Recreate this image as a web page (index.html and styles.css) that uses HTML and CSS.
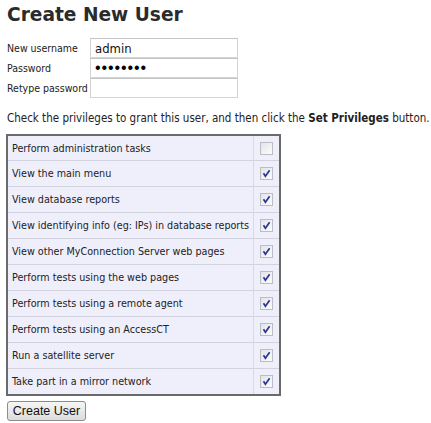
FILE: index.html
```html
<!DOCTYPE html>
<html>
<head>
<meta charset="utf-8">
<link rel="stylesheet" href="styles.css">
</head>
<body>
<h1 class="title">Create New User</h1>
<form class="user-form">
  <div class="fields">
    <label class="lbl" for="u">New username</label>
    <input class="inp" id="u" type="text" value="admin">
    <label class="lbl" for="p">Password</label>
    <input class="inp pw" id="p" type="password" value="password">
    <label class="lbl" for="r">Retype password</label>
    <input class="inp pw" id="r" type="password" value="">
  </div>
  <p class="intro">Check the privileges to grant this user, and then click the <b>Set Privileges</b> button.</p>
  <table class="privs">
    <tr><td class="name">Perform administration tasks</td><td class="chk"><label class="cb"><input type="checkbox"><svg class="tick" viewBox="0 0 13 13"><path d="M3.5 6.2 L5.4 9.2 L9.6 3.2" fill="none" stroke="#27349a" stroke-width="1.7"/></svg></label></td></tr>
    <tr><td class="name">View the main menu</td><td class="chk"><label class="cb"><input type="checkbox" checked><svg class="tick" viewBox="0 0 13 13"><path d="M3.5 6.2 L5.4 9.2 L9.6 3.2" fill="none" stroke="#27349a" stroke-width="1.7"/></svg></label></td></tr>
    <tr><td class="name">View database reports</td><td class="chk"><label class="cb"><input type="checkbox" checked><svg class="tick" viewBox="0 0 13 13"><path d="M3.5 6.2 L5.4 9.2 L9.6 3.2" fill="none" stroke="#27349a" stroke-width="1.7"/></svg></label></td></tr>
    <tr><td class="name">View identifying info (eg: IPs) in database reports</td><td class="chk"><label class="cb"><input type="checkbox" checked><svg class="tick" viewBox="0 0 13 13"><path d="M3.5 6.2 L5.4 9.2 L9.6 3.2" fill="none" stroke="#27349a" stroke-width="1.7"/></svg></label></td></tr>
    <tr><td class="name">View other MyConnection Server web pages</td><td class="chk"><label class="cb"><input type="checkbox" checked><svg class="tick" viewBox="0 0 13 13"><path d="M3.5 6.2 L5.4 9.2 L9.6 3.2" fill="none" stroke="#27349a" stroke-width="1.7"/></svg></label></td></tr>
    <tr><td class="name">Perform tests using the web pages</td><td class="chk"><label class="cb"><input type="checkbox" checked><svg class="tick" viewBox="0 0 13 13"><path d="M3.5 6.2 L5.4 9.2 L9.6 3.2" fill="none" stroke="#27349a" stroke-width="1.7"/></svg></label></td></tr>
    <tr><td class="name">Perform tests using a remote agent</td><td class="chk"><label class="cb"><input type="checkbox" checked><svg class="tick" viewBox="0 0 13 13"><path d="M3.5 6.2 L5.4 9.2 L9.6 3.2" fill="none" stroke="#27349a" stroke-width="1.7"/></svg></label></td></tr>
    <tr><td class="name">Perform tests using an AccessCT</td><td class="chk"><label class="cb"><input type="checkbox" checked><svg class="tick" viewBox="0 0 13 13"><path d="M3.5 6.2 L5.4 9.2 L9.6 3.2" fill="none" stroke="#27349a" stroke-width="1.7"/></svg></label></td></tr>
    <tr><td class="name">Run a satellite server</td><td class="chk"><label class="cb"><input type="checkbox" checked><svg class="tick" viewBox="0 0 13 13"><path d="M3.5 6.2 L5.4 9.2 L9.6 3.2" fill="none" stroke="#27349a" stroke-width="1.7"/></svg></label></td></tr>
    <tr><td class="name">Take part in a mirror network</td><td class="chk"><label class="cb"><input type="checkbox" checked><svg class="tick" viewBox="0 0 13 13"><path d="M3.5 6.2 L5.4 9.2 L9.6 3.2" fill="none" stroke="#27349a" stroke-width="1.7"/></svg></label></td></tr>
  </table>
  <button class="btn" type="button">Create User</button>
</form>
</body>
</html>
```
FILE: styles.css
```css
body {
  margin: 0;
  padding: 0 7px;
  font-family: "DejaVu Sans Condensed", "DejaVu Sans", sans-serif;
  font-size: 10.5px;
  color: #222;
  background: #fff;
}
.title {
  margin: 0;
  padding-top: 3px;
  height: 31px;
  font-family: "DejaVu Sans", sans-serif;
  font-size: 18.6px;
  font-weight: bold;
  color: #2b2b2b;
  line-height: 24px;
}
.user-form { margin: 0; }
.fields {
  display: grid;
  grid-template-columns: 83px 148px;
  align-items: center;
  margin-top: 4px;
}
.lbl {
  height: 20px;
  line-height: 20px;
  white-space: nowrap;
}
.inp {
  box-sizing: border-box;
  width: 148px;
  height: 20px;
  margin: 0;
  border: 1px solid #d4d4d4;
  border-top-color: #c4c4c4;
  padding: 0 4px;
  font-family: "DejaVu Sans Condensed", "DejaVu Sans", sans-serif;
  font-size: 13px;
  color: #111;
  background: #fff;
  outline: none;
}
.inp.pw {
  font-family: "Liberation Sans", Arial, sans-serif;
  font-size: 16px;
  letter-spacing: 0.9px;
  color: #000;
}
.intro {
  margin: 13px 0 9px;
  font-size: 11.5px;
  line-height: 14px;
  white-space: nowrap;
}
.privs {
  border-collapse: collapse;
  border: 2px solid #6a6a6a;
  background: #efeffc;
  margin-left: -1px;
  width: 275px;
  font-size: 10.7px;
}
.privs td {
  height: 25px;
  padding: 0 4px;
  border-top: 1px solid #d3d3e0;
  white-space: nowrap;
}
.privs tr:first-child td { border-top: none; height: 24px; }
.privs td.chk {
  width: 14px;
  text-align: center;
  border-left: 1px solid #d8d8e6;
  padding: 0 6px;
}
.cb {
  position: relative;
  display: inline-block;
  width: 13px;
  height: 13px;
  vertical-align: middle;
}
.cb input {
  appearance: none;
  -webkit-appearance: none;
  box-sizing: border-box;
  display: block;
  margin: 0;
  width: 13px;
  height: 13px;
  border: 1px solid #bcbcc4;
  background: linear-gradient(135deg, #e4e4e8, #fcfcfc);
}
.cb .tick {
  position: absolute;
  left: 0;
  top: 0;
  width: 13px;
  height: 13px;
  display: none;
  pointer-events: none;
}
.cb input:checked + .tick { display: block; }
.btn {
  display: block;
  margin-top: 5px;
  width: 79px;
  height: 20px;
  padding: 0;
  font-family: "Liberation Sans", Arial, sans-serif;
  font-size: 12.5px;
  color: #111;
  border: 1px solid #8c8c8c;
  border-radius: 3px;
  background: linear-gradient(#f6f6f6, #dcdcdc);
}
```
